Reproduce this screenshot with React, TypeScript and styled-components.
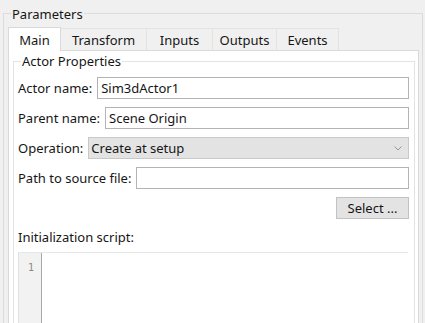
import React from "react";
import styled, { createGlobalStyle } from "styled-components";

const Global = createGlobalStyle`
  html, body { margin: 0; padding: 0; background: #f0f0f0; }
  body { font-family: "Noto Sans", "Open Sans", sans-serif; font-size: 13px; color: #161616; }
  * { box-sizing: border-box; }
`;

const Page = styled.div`
  width: 425px;
  height: 323px;
  overflow: hidden;
  background: #f0f0f0;
  padding: 4px 2px 0 3px;
`;

const ParamsSet = styled.fieldset`
  margin: 0;
  padding: 0 3px 0 4px;
  border: 1px solid #dcdcdc;
  border-bottom: none;
  height: 340px;
`;

const ParamsLegend = styled.legend`
  padding: 0 1px;
  margin-left: 3px;
  line-height: 18px;
  position: relative;
  top: 1px;
`;

const TabStrip = styled.div`
  display: flex;
  align-items: flex-end;
  height: 24px;
  margin-top: 4px;
`;

const Tab = styled.div<{ $active?: boolean; $w: number }>`
  width: ${(p) => p.$w}px;
  height: ${(p) => (p.$active ? 24 : 22)}px;
  display: flex;
  align-items: center;
  justify-content: center;
  padding-top: ${(p) => (p.$active ? 1 : 0)}px;
  background: ${(p) => (p.$active ? "#ffffff" : "#f0f0f0")};
  border: 1px solid ${(p) => (p.$active ? "#d9d9d9" : "#e3e3e3")};
  border-bottom: none;
  margin-bottom: ${(p) => (p.$active ? -1 : 0)}px;
  position: relative;
  z-index: ${(p) => (p.$active ? 1 : 0)};
  & + & { border-left: none; }
`;

const Panel = styled.div`
  background: #ffffff;
  border: 1px solid #d9d9d9;
  border-bottom: none;
  height: 300px;
  padding: 1px 3px 0 4px;
`;

const GroupSet = styled.fieldset`
  margin: 0;
  padding: 2px 5px 0 4px;
  border: 1px solid #e3e3e3;
  border-bottom: none;
  height: 300px;
  display: flex;
  flex-direction: column;
`;

const GroupLegend = styled.legend`
  padding: 0 1px;
  margin-left: 3px;
  line-height: 18px;
`;

const Row = styled.div`
  display: flex;
  align-items: center;
  height: 22px;
  margin-top: 8px;
  &:first-of-type { margin-top: 5px; }
`;

const Label = styled.span`
  white-space: nowrap;
  margin-right: 5px;
`;

const Field = styled.div`
  flex: 1;
  height: 22px;
  border: 1px solid #b4b4b4;
  background: #ffffff;
  display: flex;
  align-items: center;
  padding-left: 3px;
  white-space: nowrap;
`;

const Combo = styled.div`
  flex: 1;
  height: 22px;
  border: 1px solid #c8c8c8;
  background: #e3e3e3;
  display: flex;
  align-items: center;
  justify-content: space-between;
  padding: 0 6px 0 2px;
`;

const ButtonRow = styled(Row)`
  justify-content: flex-end;
`;

const Button = styled.div`
  width: 73px;
  height: 22px;
  border: 1px solid #c2c2c2;
  background: #e3e3e3;
  display: flex;
  align-items: center;
  justify-content: center;
`;

const ScriptLabel = styled.div`
  margin-top: 9px;
  line-height: 18px;
`;

const Editor = styled.div`
  margin-top: 6px;
  margin-right: 1px;
  border-top: 1px solid #e6e6e6;
  border-left: 1px solid #e0e0e0;
  flex: 1;
  display: flex;
`;

const Gutter = styled.div`
  width: 23px;
  background: #f2f2f2;
  border-right: 1px solid #a8a8a8;
  font-family: "DejaVu Sans Mono", monospace;
  font-size: 10px;
  color: #8a8a8a;
  text-align: right;
  padding: 9px 7px 0 0;
`;

const Code = styled.div`
  flex: 1;
  background: #ffffff;
`;

const tabs: [string, number][] = [
  ["Main", 53],
  ["Transform", 86],
  ["Inputs", 66],
  ["Outputs", 64],
  ["Events", 62],
];

export default function App() {
  return (
    <Page>
      <Global />
      <ParamsSet>
        <ParamsLegend>Parameters</ParamsLegend>
        <TabStrip>
          {tabs.map(([t, w], i) => (
            <Tab key={t} $w={w} $active={i === 0}>
              {t}
            </Tab>
          ))}
        </TabStrip>
        <Panel>
          <GroupSet>
            <GroupLegend>Actor Properties</GroupLegend>
            <Row>
              <Label>Actor name:</Label>
              <Field>Sim3dActor1</Field>
            </Row>
            <Row>
              <Label>Parent name:</Label>
              <Field>Scene Origin</Field>
            </Row>
            <Row>
              <Label>Operation:</Label>
              <Combo>
                <span>Create at setup</span>
                <svg width="8" height="5" viewBox="0 0 8 5">
                  <polyline points="0.5,0.5 4,4 7.5,0.5" fill="none" stroke="#999" strokeWidth="1" />
                </svg>
              </Combo>
            </Row>
            <Row>
              <Label>Path to source file:</Label>
              <Field />
            </Row>
            <ButtonRow>
              <Button>Select ...</Button>
            </ButtonRow>
            <ScriptLabel>Initialization script:</ScriptLabel>
            <Editor>
              <Gutter>1</Gutter>
              <Code />
            </Editor>
          </GroupSet>
        </Panel>
      </ParamsSet>
    </Page>
  );
}
